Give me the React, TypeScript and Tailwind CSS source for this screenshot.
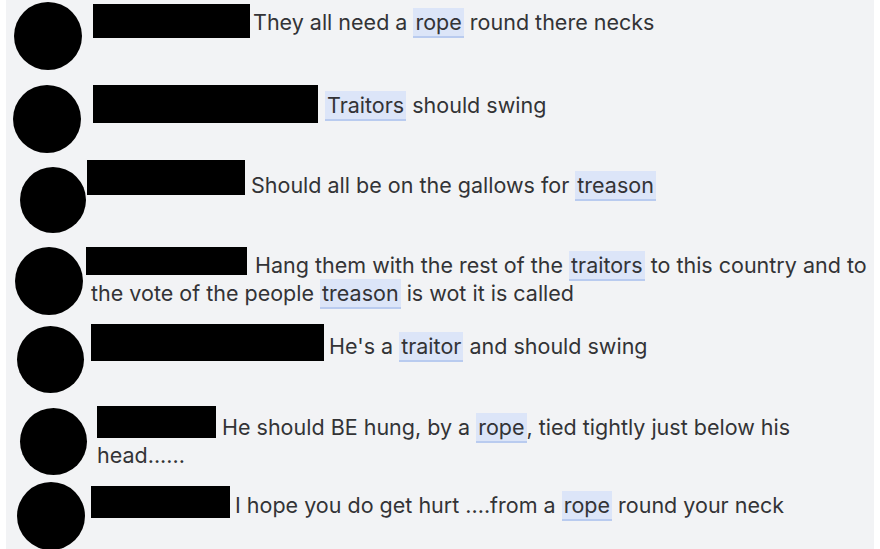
import React from "react";

const Hl = ({ children }: { children: React.ReactNode }) => (
  <span className="bg-[#dce5f8] border-b-2 border-[#b9cbef] px-[2px] py-[1px]">{children}</span>
);

function Row({
  rowCls,
  circleCls,
  textCls,
  rectCls,
  children,
}: {
  rowCls: string;
  circleCls: string;
  textCls: string;
  rectCls: string;
  children: React.ReactNode;
}) {
  return (
    <div className={`flex items-start shrink-0 ${rowCls}`}>
      <div className={`rounded-full bg-black shrink-0 ${circleCls}`} />
      <div
        className={`text-[21.5px] leading-[28px] text-[#333336] whitespace-nowrap font-['Inter','Noto_Sans',sans-serif] ${textCls}`}
      >
        <div>
          <span className={`inline-block align-top bg-black ${rectCls}`} />
          {children}
        </div>
      </div>
    </div>
  );
}

export default function App() {
  return (
    <div className="w-[880px] h-[549px] bg-white flex overflow-hidden">
      <div className="ml-[6px] w-[868px] h-full bg-[#f2f3f5] flex flex-col overflow-hidden">
        <Row
          rowCls="h-[80px]"
          circleCls="ml-[8px] mt-[2px] w-[68px] h-[68px]"
          textCls="ml-[11px] mt-[8px]"
          rectCls="w-[157px] h-[34px] mt-[-4px] mb-[-2px] mr-[3px]"
        >
          They all need a <Hl>rope</Hl> round there necks
        </Row>
        <Row
          rowCls="h-[78px]"
          circleCls="ml-[7px] mt-[5px] w-[68px] h-[68px]"
          textCls="ml-[12px] mt-[11px]"
          rectCls="w-[225px] h-[38px] mt-[-6px] mb-[-4px] mr-[7px]"
        >
          <Hl>Traitors</Hl> should swing
        </Row>
        <Row
          rowCls="h-[82px]"
          circleCls="ml-[14px] mt-[9px] w-[66px] h-[66px]"
          textCls="ml-[1px] mt-[13px]"
          rectCls="w-[158px] h-[35px] mt-[-11px] mb-[4px] mr-[6px]"
        >
          Should all be on the gallows for <Hl>treason</Hl>
        </Row>
        <Row
          rowCls="h-[80px]"
          circleCls="ml-[9px] mt-[7px] w-[68px] h-[68px]"
          textCls="ml-[8px] mt-[11px]"
          rectCls="w-[161px] h-[28px] mt-[-4px] mb-[4px] ml-[-5px] mr-[8px]"
        >
          Hang them with the rest of the <Hl>traitors</Hl> to this country and to
          <br />
          the vote of the people <Hl>treason</Hl> is wot it is called
        </Row>
        <Row
          rowCls="h-[80px]"
          circleCls="ml-[11px] mt-[6px] w-[67px] h-[67px]"
          textCls="ml-[7px] mt-[12px]"
          rectCls="w-[233px] h-[37px] mt-[-8px] mb-[-1px] mr-[5px]"
        >
          He's a <Hl>traitor</Hl> and should swing
        </Row>
        <Row
          rowCls="h-[78px]"
          circleCls="ml-[14px] mt-[8px] w-[67px] h-[67px]"
          textCls="ml-[10px] mt-[13px]"
          rectCls="w-[119px] h-[32px] mt-[-7px] mb-[3px] mr-[6px]"
        >
          He should BE hung, by a <Hl>rope</Hl>, tied tightly just below his
          <br />
          head......
        </Row>
        <Row
          rowCls="h-[71px]"
          circleCls="ml-[11px] mt-[4px] w-[68px] h-[68px]"
          textCls="ml-[6px] mt-[13px]"
          rectCls="w-[139px] h-[32px] mt-[-5px] mb-[1px] mr-[5px]"
        >
          I hope you do get hurt ....from a <Hl>rope</Hl> round your neck
        </Row>
      </div>
    </div>
  );
}
